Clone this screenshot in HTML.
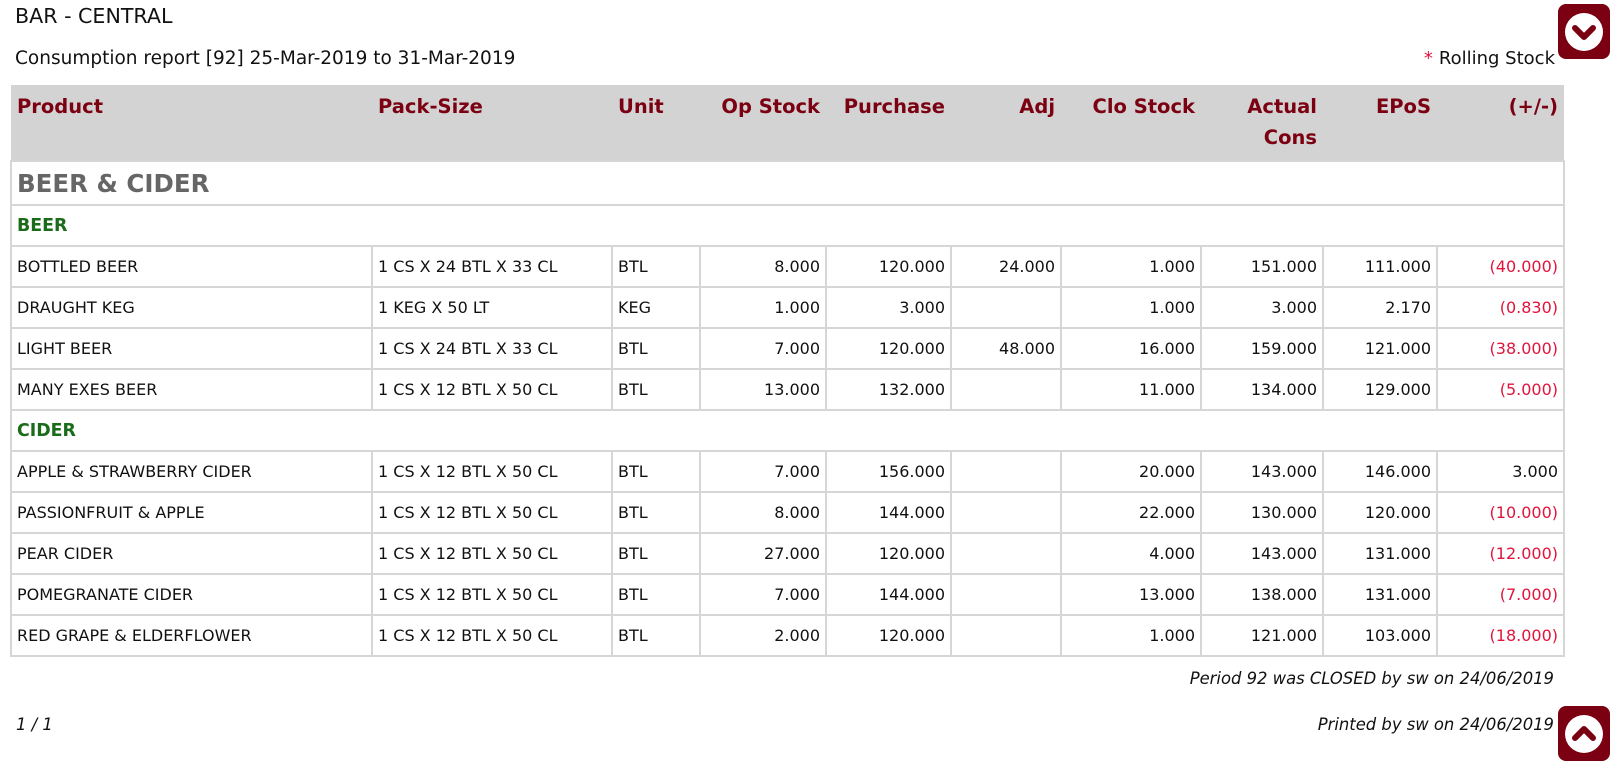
<!DOCTYPE html>
<html><head><meta charset="utf-8"><style>
*{margin:0;padding:0;box-sizing:border-box}
body{width:1611px;height:763px;background:#fff;font-family:"DejaVu Sans","Liberation Sans",sans-serif;color:#111;position:relative;overflow:hidden}
.t1{position:absolute;left:15px;top:4px;font-size:20.6px}
.t2{position:absolute;left:15px;top:48px;font-size:18.5px}
.t3{position:absolute;right:56px;top:48px;font-size:18px}
.t3 b{color:#e0143c;font-weight:normal;margin-right:6px}
table{position:absolute;left:10px;top:85px;width:1553px;border-collapse:collapse;table-layout:fixed}
td{border:2px solid #d6d6d6;height:41px;font-size:16px;padding:0 5px;white-space:nowrap;overflow:hidden}
th{background:#d3d3d3;color:#7b0011;font-size:19.5px;font-weight:bold;height:76px;vertical-align:top;padding:6px 6px 0;line-height:31px;border:none}
.r{text-align:right}.l{text-align:left}
.neg{color:#e0143c}
.grp{font-size:24.5px;font-weight:bold;color:#666;height:44px}
.sub{font-size:17.4px;font-weight:bold;color:#1a6b1a}
.f1{position:absolute;right:57px;top:669px;font-size:16.4px;font-style:italic}
.f2{position:absolute;right:57px;top:715px;font-size:16.4px;font-style:italic}
.f3{position:absolute;left:16px;top:715px;font-size:16.4px;font-style:italic}
.btn{position:absolute;left:1558px;width:52px;height:55px;background:#7b0011;border-radius:8px}
.btn svg{position:absolute;left:6px;top:8px}
</style></head><body>
<div class="t1">BAR - CENTRAL</div>
<div class="t2">Consumption report [92] 25-Mar-2019 to 31-Mar-2019</div>
<div class="t3"><b>*</b>Rolling Stock</div>
<div class="btn" style="top:4px"><svg width="40" height="40" viewBox="0 0 40 40"><circle cx="20" cy="20" r="19" fill="#fff"/><path d="M11 16 L20 25 L29 16" stroke="#7b0011" stroke-width="6" fill="none" stroke-linecap="round" stroke-linejoin="round"/></svg></div>
<div class="btn" style="top:706px"><svg width="40" height="40" viewBox="0 0 40 40"><circle cx="20" cy="20" r="19" fill="#fff"/><path d="M11 24 L20 15 L29 24" stroke="#7b0011" stroke-width="6" fill="none" stroke-linecap="round" stroke-linejoin="round"/></svg></div>
<table>
<colgroup><col style="width:361px"><col style="width:240px"><col style="width:88px"><col style="width:126px"><col style="width:125px"><col style="width:110px"><col style="width:140px"><col style="width:122px"><col style="width:114px"><col style="width:127px"></colgroup>
<tr><th class="l">Product</th><th class="l">Pack-Size</th><th class="l">Unit</th><th class="r">Op Stock</th><th class="r">Purchase</th><th class="r">Adj</th><th class="r">Clo Stock</th><th class="r">Actual<br>Cons</th><th class="r">EPoS</th><th class="r">(+/-)</th></tr>
<tr><td colspan="10" class="grp">BEER &amp; CIDER</td></tr>
<tr><td colspan="10" class="sub">BEER</td></tr>
<tr><td>BOTTLED BEER</td><td>1 CS X 24 BTL X 33 CL</td><td>BTL</td><td class="r">8.000</td><td class="r">120.000</td><td class="r">24.000</td><td class="r">1.000</td><td class="r">151.000</td><td class="r">111.000</td><td class="r neg">(40.000)</td></tr>
<tr><td>DRAUGHT KEG</td><td>1 KEG X 50 LT</td><td>KEG</td><td class="r">1.000</td><td class="r">3.000</td><td class="r"></td><td class="r">1.000</td><td class="r">3.000</td><td class="r">2.170</td><td class="r neg">(0.830)</td></tr>
<tr><td>LIGHT BEER</td><td>1 CS X 24 BTL X 33 CL</td><td>BTL</td><td class="r">7.000</td><td class="r">120.000</td><td class="r">48.000</td><td class="r">16.000</td><td class="r">159.000</td><td class="r">121.000</td><td class="r neg">(38.000)</td></tr>
<tr><td>MANY EXES BEER</td><td>1 CS X 12 BTL X 50 CL</td><td>BTL</td><td class="r">13.000</td><td class="r">132.000</td><td class="r"></td><td class="r">11.000</td><td class="r">134.000</td><td class="r">129.000</td><td class="r neg">(5.000)</td></tr>
<tr><td colspan="10" class="sub">CIDER</td></tr>
<tr><td>APPLE &amp; STRAWBERRY CIDER</td><td>1 CS X 12 BTL X 50 CL</td><td>BTL</td><td class="r">7.000</td><td class="r">156.000</td><td class="r"></td><td class="r">20.000</td><td class="r">143.000</td><td class="r">146.000</td><td class="r">3.000</td></tr>
<tr><td>PASSIONFRUIT &amp; APPLE</td><td>1 CS X 12 BTL X 50 CL</td><td>BTL</td><td class="r">8.000</td><td class="r">144.000</td><td class="r"></td><td class="r">22.000</td><td class="r">130.000</td><td class="r">120.000</td><td class="r neg">(10.000)</td></tr>
<tr><td>PEAR CIDER</td><td>1 CS X 12 BTL X 50 CL</td><td>BTL</td><td class="r">27.000</td><td class="r">120.000</td><td class="r"></td><td class="r">4.000</td><td class="r">143.000</td><td class="r">131.000</td><td class="r neg">(12.000)</td></tr>
<tr><td>POMEGRANATE CIDER</td><td>1 CS X 12 BTL X 50 CL</td><td>BTL</td><td class="r">7.000</td><td class="r">144.000</td><td class="r"></td><td class="r">13.000</td><td class="r">138.000</td><td class="r">131.000</td><td class="r neg">(7.000)</td></tr>
<tr><td>RED GRAPE &amp; ELDERFLOWER</td><td>1 CS X 12 BTL X 50 CL</td><td>BTL</td><td class="r">2.000</td><td class="r">120.000</td><td class="r"></td><td class="r">1.000</td><td class="r">121.000</td><td class="r">103.000</td><td class="r neg">(18.000)</td></tr>
</table>
<div class="f1">Period 92 was CLOSED by sw on 24/06/2019</div>
<div class="f3">1 / 1</div>
<div class="f2">Printed by sw on 24/06/2019</div>
</body></html>
